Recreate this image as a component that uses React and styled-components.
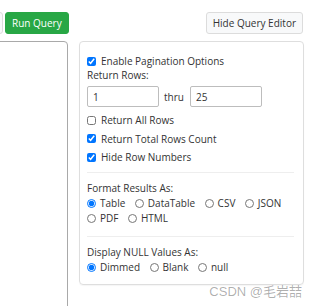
import React, { useState } from 'react';
import styled, { createGlobalStyle } from 'styled-components';

const GlobalStyle = createGlobalStyle`
  html, body {
    margin: 0;
    padding: 0;
    background: #fff;
    overflow: hidden;
  }
  body {
    font-family: "Open Sans", "Noto Sans", sans-serif;
    font-size: 10px;
    color: #333;
  }
`;

const Page = styled.div`
  position: relative;
  width: 318px;
  height: 306px;
  overflow: hidden;
`;

const TopBar = styled.div`
  display: flex;
  justify-content: space-between;
  align-items: center;
  padding: 12px 15px 0 0;
`;

const ButtonGroup = styled.div`
  display: flex;
  gap: 2px;
`;

const Button = styled.button`
  font-family: inherit;
  font-size: 10px;
  line-height: 14px;
  height: 22px;
  padding: 3px 6px;
  border-radius: 3px;
  border: 1px solid ${p => (p.$primary ? '#28a745' : '#dcdcdc')};
  background: ${p => (p.$primary ? '#28a745' : '#f8f9fa')};
  color: ${p => (p.$primary ? '#fff' : '#333')};
  cursor: pointer;
  white-space: nowrap;
`;

/* the button left of Run Query scrolls off the page, only its right edge shows */
const GhostButton = styled(Button)`
  width: 43px;
  margin-left: -40px;
`;

const Body = styled.div`
  display: flex;
  align-items: flex-start;
  margin-top: 7px;
`;

const Editor = styled.div`
  box-sizing: border-box;
  margin-left: -100px;
  width: 168px;
  height: 320px;
  border: 1px solid #a9a9a9;
  border-radius: 4px;
  background: #fff;
`;

const Panel = styled.div`
  box-sizing: border-box;
  margin-left: 11px;
  width: 225px;
  height: 244px;
  border: 1px solid #dedede;
  border-radius: 4px;
  padding: 12px 9px 0 7px;
  box-shadow: 0 1px 1px rgba(0, 0, 0, 0.04);
`;

const CheckRow = styled.label`
  display: flex;
  align-items: center;
  height: ${p => p.$h || 18.5}px;
  white-space: nowrap;
`;

const Box = styled.input`
  width: 9px;
  height: 9px;
  margin: 0 5px 0 0;
  accent-color: #0075ff;
`;

const Label = styled.div`
  line-height: 14px;
  margin-top: ${p => p.$mt || 0}px;
`;

const RangeRow = styled.div`
  display: flex;
  align-items: center;
  margin: 4px 0 3.75px;
`;

const NumInput = styled.input`
  box-sizing: border-box;
  width: 72px;
  height: 21px;
  padding: 3px 5px;
  font-family: inherit;
  font-size: 10px;
  color: #333;
  border: 1px solid #bdbdbd;
  border-radius: 2px;
  outline: none;
`;

const Thru = styled.span`
  margin: 0 6px 0 5px;
`;

const Divider = styled.div`
  height: 1px;
  background: #eeeeee;
  margin: ${p => p.$m};
`;

const RadioGroup = styled.div`
  display: flex;
  flex-wrap: wrap;
  column-gap: 9.5px;
  margin-top: 0.8px;
`;

const RadioItem = styled.label`
  display: flex;
  align-items: center;
  height: 15px;
  white-space: nowrap;
`;

const Radio = styled.input`
  width: 9px;
  height: 9px;
  margin: 0 4px 0 0;
  accent-color: #0075ff;
`;

const Watermark = styled.div`
  position: absolute;
  right: 16px;
  top: 281px;
  font-family: "Liberation Sans", "Noto Sans CJK SC", sans-serif;
  font-size: 13px;
  color: rgba(0, 0, 0, 0.33);
  pointer-events: none;
`;

function RadioSet({ name, options, value, onChange }) {
  return (
    <RadioGroup>
      {options.map(o => (
        <RadioItem key={o}>
          <Radio
            type="radio"
            name={name}
            checked={value === o}
            onChange={() => onChange(o)}
          />
          {o}
        </RadioItem>
      ))}
    </RadioGroup>
  );
}

export default function App() {
  const [paging, setPaging] = useState(true);
  const [allRows, setAllRows] = useState(false);
  const [totalCount, setTotalCount] = useState(true);
  const [hideNumbers, setHideNumbers] = useState(true);
  const [from, setFrom] = useState('1');
  const [to, setTo] = useState('25');
  const [format, setFormat] = useState('Table');
  const [nulls, setNulls] = useState('Dimmed');

  return (
    <Page>
      <GlobalStyle />
      <TopBar>
        <ButtonGroup>
          <GhostButton aria-label="Format" />
          <Button $primary>Run Query</Button>
        </ButtonGroup>
        <Button>Hide Query Editor</Button>
      </TopBar>
      <Body>
        <Editor />
        <Panel>
          <CheckRow $h={14}>
            <Box type="checkbox" checked={paging} onChange={e => setPaging(e.target.checked)} />
            Enable Pagination Options
          </CheckRow>
          <Label>Return Rows:</Label>
          <RangeRow>
            <NumInput value={from} onChange={e => setFrom(e.target.value)} />
            <Thru>thru</Thru>
            <NumInput value={to} onChange={e => setTo(e.target.value)} />
          </RangeRow>
          <CheckRow>
            <Box type="checkbox" checked={allRows} onChange={e => setAllRows(e.target.checked)} />
            Return All Rows
          </CheckRow>
          <CheckRow>
            <Box type="checkbox" checked={totalCount} onChange={e => setTotalCount(e.target.checked)} />
            Return Total Rows Count
          </CheckRow>
          <CheckRow>
            <Box type="checkbox" checked={hideNumbers} onChange={e => setHideNumbers(e.target.checked)} />
            Hide Row Numbers
          </CheckRow>
          <Divider $m="6px 0 0" />
          <Label $mt={7.7}>Format Results As:</Label>
          <RadioSet
            name="format"
            options={['Table', 'DataTable', 'CSV', 'JSON', 'PDF', 'HTML']}
            value={format}
            onChange={setFormat}
          />
          <Divider $m="10.5px 0 0" />
          <Label $mt={7.7}>Display NULL Values As:</Label>
          <RadioSet
            name="nulls"
            options={['Dimmed', 'Blank', 'null']}
            value={nulls}
            onChange={setNulls}
          />
        </Panel>
      </Body>
      <Watermark>CSDN @毛岩喆</Watermark>
    </Page>
  );
}
